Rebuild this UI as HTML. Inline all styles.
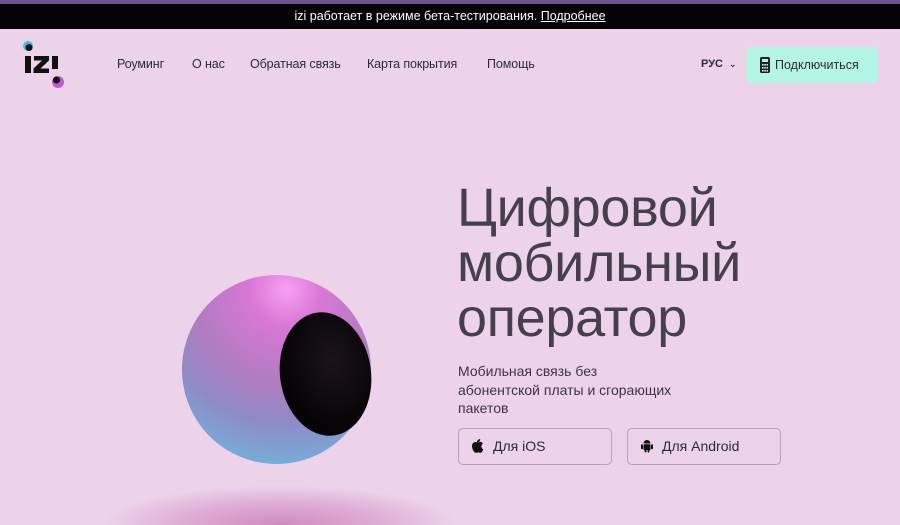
<!DOCTYPE html>
<html><head><meta charset="utf-8"><style>
*{margin:0;padding:0;box-sizing:border-box}
html,body{width:900px;height:525px;overflow:hidden}
body{background:#ecd3ea;font-family:"Liberation Sans","DejaVu Sans",sans-serif;color:#2e2a33;position:relative}
.top{position:absolute;left:0;top:0;width:900px;height:4px;background:#6b548c}
.bar{position:absolute;left:0;top:4px;width:900px;height:25px;background:#050305;color:#fff;font-size:12.5px;text-align:center;line-height:25px}
.bar u{text-decoration:underline}
.nav{position:absolute;top:57px;font-size:12.5px;color:#2e2a33;letter-spacing:-0.1px}
.lang{position:absolute;left:701px;top:58px;font-size:11px;font-weight:bold}
.btn{position:absolute;left:746px;top:47px;width:132px;height:36px;background:#b5f5e6;border-radius:6px;font-size:12.5px;line-height:36px;padding-left:29px}
h1{position:absolute;left:457px;top:181px;font-size:54px;font-weight:normal;line-height:55px;color:#45404b;letter-spacing:-0.3px}
.sub{position:absolute;left:458px;top:362px;font-size:14px;line-height:18.5px;color:#3a353f;width:260px}
.sb{position:absolute;top:428px;height:37px;border:1px solid #b9a2b6;border-radius:5px;font-size:14px;line-height:35px;padding-left:34px}
.sphere{position:absolute;left:182px;top:275px;width:189px;height:189px;border-radius:50%;background:radial-gradient(circle at 55% 8%,#f7a0f2 0%,#d877d6 18%,#b27cc0 45%,#8f8ac6 65%,#72b3dc 90%)}
.hole{position:absolute;left:280px;top:312px;width:91px;height:124px;border-radius:50%;background:radial-gradient(ellipse at 60% 40%,#1a1418,#050305 70%,#2a2028);transform:rotate(-8deg)}
.shadow{position:absolute;left:100px;top:485px;width:360px;height:40px;border-radius:50% 50% 0 0/100% 100% 0 0;background:radial-gradient(ellipse at 50% 100%,#d08bbf 0%,#dfaed6 40%,rgba(236,211,234,0) 70%)}
</style></head><body>
<div class="top"></div>
<div class="bar">izi работает в режиме бета-тестирования. <u>Подробнее</u></div>
<svg style="position:absolute;left:22px;top:40px" width="44" height="50" viewBox="0 0 44 50">
<circle cx="6" cy="6" r="5" fill="#4ab8e8"/><circle cx="7" cy="7.5" r="3.5" fill="#111"/>
<rect x="3" y="16" width="6" height="17" fill="#111"/>
<path d="M12 16h15v4.5l-8.5 8h8.5v4.5H11.5v-4.5l8.5-8h-8z" fill="#111"/>
<rect x="30" y="16" width="6" height="13" fill="#111"/>
<circle cx="36" cy="42" r="6" fill="#c05ad0"/><circle cx="34.5" cy="40" r="3.5" fill="#111"/>
</svg>
<div class="nav" style="left:117px">Роуминг</div>
<div class="nav" style="left:192px">О нас</div>
<div class="nav" style="left:250px">Обратная связь</div>
<div class="nav" style="left:367px">Карта покрытия</div>
<div class="nav" style="left:487px">Помощь</div>
<div class="lang">РУС <span style="font-size:9px;margin-left:3px">⌄</span></div>
<div class="btn"><svg style="position:absolute;left:14px;top:10px" width="10" height="16" viewBox="0 0 10 16"><rect x="0" y="0" width="10" height="16" rx="1.5" fill="#222"/><rect x="2" y="2" width="6" height="3" fill="#b5f5e6"/><g fill="#b5f5e6"><rect x="2" y="7" width="1.6" height="1.6"/><rect x="4.2" y="7" width="1.6" height="1.6"/><rect x="6.4" y="7" width="1.6" height="1.6"/><rect x="2" y="10" width="1.6" height="1.6"/><rect x="4.2" y="10" width="1.6" height="1.6"/><rect x="6.4" y="10" width="1.6" height="1.6"/><rect x="2" y="13" width="1.6" height="1.6"/><rect x="4.2" y="13" width="1.6" height="1.6"/><rect x="6.4" y="13" width="1.6" height="1.6"/></g></svg>Подключиться</div>
<h1>Цифровой<br>мобильный<br>оператор</h1>
<div class="sub">Мобильная связь без<br>абонентской платы и сгорающих<br>пакетов</div>
<div class="sb" style="left:458px;width:154px"><svg style="position:absolute;left:13px;top:10px" width="12" height="14" viewBox="0 0 12 14"><path d="M8.2 0c.1 1-.3 2-1 2.6-.6.6-1.5 1-2.3.9-.1-1 .4-1.9 1-2.5C6.6.4 7.5 0 8.2 0zM10.9 4.8c-.1.1-1.500.9-1.500 2.700 0 2.100 1.800 2.800 1.900 2.800 0 .1-.3 1-.9 2-.6.8-1.200 1.600-2.100 1.600s-1.200-.5-2.200-.5-1.400.5-2.200.5c-.9 0-1.600-.9-2.200-1.700C.6 10.600 0 8.800 0 7.100c0-2.700 1.800-4.100 3.500-4.100.9 0 1.700.6 2.200.6.5 0 1.500-.7 2.600-.7.4 0 1.800 0 2.600 1.900z" fill="#111"/></svg>Для iOS</div>
<div class="sb" style="left:627px;width:154px"><svg style="position:absolute;left:13px;top:10px" width="12" height="15" viewBox="0 0 12 15"><path d="M2.5 4.5a3.5 3.5 0 0 1 7 0z" fill="#111"/><rect x="2.5" y="5.2" width="7" height="6" rx="1" fill="#111"/><rect x="0" y="5.2" width="2" height="5" rx="1" fill="#111"/><rect x="10" y="5.2" width="2" height="5" rx="1" fill="#111"/><rect x="3.6" y="10" width="1.8" height="3.5" rx=".9" fill="#111"/><rect x="6.6" y="10" width="1.8" height="3.5" rx=".9" fill="#111"/></svg>Для Android</div>
<div class="shadow"></div>
<div class="sphere"></div>
<div class="hole"></div>
</body></html>
